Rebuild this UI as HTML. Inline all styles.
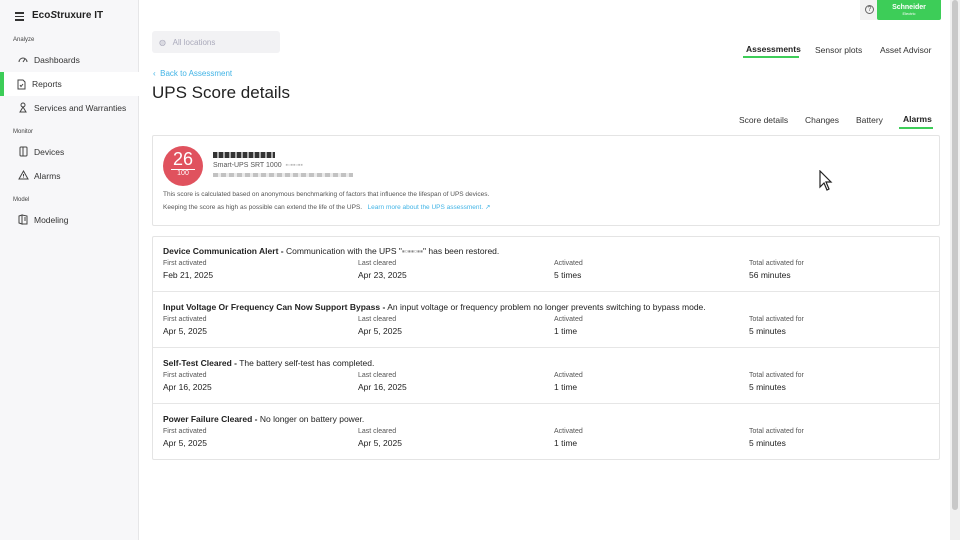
<!DOCTYPE html><html><head><style>
*{box-sizing:border-box;margin:0;padding:0}
body{width:960px;height:540px;overflow:hidden;font-family:"Liberation Sans",sans-serif;color:#222;background:#fff;position:relative}
.a{position:absolute;white-space:nowrap}
.side{position:absolute;left:0;top:0;width:139px;height:540px;background:#f7f7f9;border-right:1px solid #e6e6e8}
.sec{font-size:6px;color:#444}
.nav{font-size:8.5px;color:#333}
.lbl{font-size:7px;color:#555}
.val{font-size:8.5px;color:#222}
.t{font-size:8.5px;color:#222}
svg.i{position:absolute;fill:none;stroke:#444;stroke-width:1}
</style></head><body>
<div class="side">
<div class="a" style="left:15px;top:12px;width:9px;height:1.5px;background:#333"></div>
<div class="a" style="left:15px;top:15.5px;width:9px;height:1.5px;background:#333"></div>
<div class="a" style="left:15px;top:19px;width:9px;height:1.5px;background:#333"></div>
<div class="a" style="left:32px;top:10px;font-size:10px;font-weight:bold;color:#222">Eco<span style="font-style:italic">S</span>truxure IT</div>
<div class="a sec" style="left:13px;top:37px">Analyze</div>
<svg class="i" style="left:18px;top:55px" width="10" height="9" viewBox="0 0 10 9"><path d="M1 7 A4 4 0 1 1 9 7"/><path d="M5 7 L7 4"/></svg>
<div class="a nav" style="left:34px;top:55px">Dashboards</div>
<div class="a" style="left:0;top:72px;width:139px;height:24px;background:#fff"></div>
<div class="a" style="left:0;top:72px;width:4px;height:24px;background:#3dcd58"></div>
<svg class="i" style="left:17px;top:79px" width="9" height="11" viewBox="0 0 9 11"><path d="M1 1 H6 L8 3 V10 H1 Z"/><path d="M3 6 L4 7.5 L6 5"/></svg>
<div class="a nav" style="left:32px;top:79px">Reports</div>
<svg class="i" style="left:18px;top:102px" width="10" height="11" viewBox="0 0 10 11"><circle cx="5" cy="3" r="2"/><path d="M2 10 L5 5 L8 10 Z"/></svg>
<div class="a nav" style="left:34px;top:103px">Services and Warranties</div>
<div class="a sec" style="left:13px;top:129px">Monitor</div>
<svg class="i" style="left:19px;top:146px" width="9" height="11" viewBox="0 0 9 11"><rect x="1" y="1" width="7" height="9" rx="1"/><path d="M4 1 V10"/></svg>
<div class="a nav" style="left:34px;top:147px">Devices</div>
<svg class="i" style="left:18px;top:170px" width="11" height="10" viewBox="0 0 11 10"><path d="M5.5 1 L10 9 H1 Z"/><path d="M5.5 4 V6.5 M5.5 7.5 V8"/></svg>
<div class="a nav" style="left:34px;top:171px">Alarms</div>
<div class="a sec" style="left:13px;top:197px">Model</div>
<svg class="i" style="left:18px;top:214px" width="10" height="11" viewBox="0 0 10 11"><path d="M1 2 L4 1 V10 L1 9 Z M4 1 L9 2 V10 L4 10 M6 4 H8 M6 6 H8"/></svg>
<div class="a nav" style="left:34px;top:215px">Modeling</div>
</div>
<div class="a" style="left:950px;top:0;width:10px;height:540px;background:#f0f0f0"></div>
<div class="a" style="left:952px;top:0;width:6px;height:510px;background:#c8c8c8;border-radius:3px"></div>
<div class="a" style="left:860px;top:0;width:18px;height:20px;background:#f2f2f2"></div>
<div class="a" style="left:865px;top:5px;font-size:7px;color:#555;border:1px solid #666;border-radius:50%;width:9px;height:9px;text-align:center;line-height:8px">?</div>
<div class="a" style="left:877px;top:0;width:64px;height:20px;background:#3dcd58;color:#fff;font-size:7px;font-weight:bold;text-align:center;padding-top:4px;border-radius:0 0 2px 2px">Schneider<div style="font-size:4px;font-weight:normal">Electric</div></div>
<div class="a" style="left:152px;top:31px;width:128px;height:22px;background:#f2f2f4;border-radius:3px"></div>
<div class="a" style="left:159px;top:38px;font-size:8px;color:#aab">◍ &nbsp;&nbsp;All locations</div>
<div class="a" style="left:746px;top:44px;font-size:8.5px;font-weight:bold">Assessments</div>
<div class="a" style="left:743px;top:56px;width:56px;height:2px;background:#3dcd58"></div>
<div class="a" style="left:815px;top:45px;font-size:8.5px;color:#333">Sensor plots</div>
<div class="a" style="left:880px;top:45px;font-size:8.5px;color:#333">Asset Advisor</div>
<div class="a" style="left:153px;top:69px;font-size:8px;color:#42b4e6">‹ &nbsp;Back to Assessment</div>
<div class="a" style="left:152px;top:83px;font-size:17px;color:#222">UPS Score details</div>
<div class="a" style="left:739px;top:115px;font-size:8.5px;color:#333">Score details</div>
<div class="a" style="left:805px;top:115px;font-size:8.5px;color:#333">Changes</div>
<div class="a" style="left:856px;top:115px;font-size:8.5px;color:#333">Battery</div>
<div class="a" style="left:903px;top:114px;font-size:8.5px;font-weight:bold">Alarms</div>
<div class="a" style="left:899px;top:127px;width:34px;height:2px;background:#3dcd58"></div>
<div class="a" style="left:152px;top:135px;width:788px;height:91px;border:1px solid #e4e4e4;border-radius:2px"></div>
<div class="a" style="left:163px;top:146px;width:40px;height:40px;border-radius:50%;background:#e0525e;color:#fff;text-align:center">
<div style="font-size:18px;line-height:20px;margin-top:3px">26</div>
<div style="width:24px;height:1px;background:#fff;margin:0 auto"></div>
<div style="font-size:7px">100</div></div>
<div class="a" style="left:213px;top:152px;width:62px;height:6px;background:repeating-linear-gradient(90deg,#333 0 4px,#aaa 4px 6px)"></div>
<div class="a" style="left:213px;top:162px;font-size:7px;color:#555">Smart-UPS SRT 1000 &nbsp;<span style="color:#bbb">▪▫▪▪▫▪▪</span></div>
<div class="a" style="left:213px;top:173px;width:140px;height:4px;background:repeating-linear-gradient(90deg,#999 0 5px,#ddd 5px 8px);opacity:.6"></div>
<div class="a" style="left:163px;top:191px;font-size:6.5px;color:#555">This score is calculated based on anonymous benchmarking of factors that influence the lifespan of UPS devices.</div>
<div class="a" style="left:163px;top:203px;font-size:6.5px;color:#555">Keeping the score as high as possible can extend the life of the UPS. &nbsp;&nbsp;<span style="color:#42b4e6">Learn more about the UPS assessment. ↗</span></div>
<div class="a" style="left:152px;top:236px;width:788px;height:224px;border:1px solid #e4e4e4;border-radius:2px"></div>
<div class="a" style="left:153px;top:291px;width:786px;height:1px;background:#e6e6e6"></div>
<div class="a" style="left:153px;top:347px;width:786px;height:1px;background:#e6e6e6"></div>
<div class="a" style="left:153px;top:403px;width:786px;height:1px;background:#e6e6e6"></div>

<div class="a t" style="left:163px;top:246px"><b>Device Communication Alert -</b> Communication with the UPS "<span style="color:#888">▪▫▪▪▫▪▪</span>" has been restored.</div>
<div class="a lbl" style="left:163px;top:260px">First activated</div><div class="a val" style="left:163px;top:270px">Feb 21, 2025</div>
<div class="a lbl" style="left:358px;top:260px">Last cleared</div><div class="a val" style="left:358px;top:270px">Apr 23, 2025</div>
<div class="a lbl" style="left:554px;top:260px">Activated</div><div class="a val" style="left:554px;top:270px">5 times</div>
<div class="a lbl" style="left:749px;top:260px">Total activated for</div><div class="a val" style="left:749px;top:270px">56 minutes</div>

<div class="a t" style="left:163px;top:302px"><b>Input Voltage Or Frequency Can Now Support Bypass -</b> An input voltage or frequency problem no longer prevents switching to bypass mode.</div>
<div class="a lbl" style="left:163px;top:316px">First activated</div><div class="a val" style="left:163px;top:326px">Apr 5, 2025</div>
<div class="a lbl" style="left:358px;top:316px">Last cleared</div><div class="a val" style="left:358px;top:326px">Apr 5, 2025</div>
<div class="a lbl" style="left:554px;top:316px">Activated</div><div class="a val" style="left:554px;top:326px">1 time</div>
<div class="a lbl" style="left:749px;top:316px">Total activated for</div><div class="a val" style="left:749px;top:326px">5 minutes</div>

<div class="a t" style="left:163px;top:358px"><b>Self-Test Cleared -</b> The battery self-test has completed.</div>
<div class="a lbl" style="left:163px;top:372px">First activated</div><div class="a val" style="left:163px;top:382px">Apr 16, 2025</div>
<div class="a lbl" style="left:358px;top:372px">Last cleared</div><div class="a val" style="left:358px;top:382px">Apr 16, 2025</div>
<div class="a lbl" style="left:554px;top:372px">Activated</div><div class="a val" style="left:554px;top:382px">1 time</div>
<div class="a lbl" style="left:749px;top:372px">Total activated for</div><div class="a val" style="left:749px;top:382px">5 minutes</div>

<div class="a t" style="left:163px;top:414px"><b>Power Failure Cleared -</b> No longer on battery power.</div>
<div class="a lbl" style="left:163px;top:428px">First activated</div><div class="a val" style="left:163px;top:438px">Apr 5, 2025</div>
<div class="a lbl" style="left:358px;top:428px">Last cleared</div><div class="a val" style="left:358px;top:438px">Apr 5, 2025</div>
<div class="a lbl" style="left:554px;top:428px">Activated</div><div class="a val" style="left:554px;top:438px">1 time</div>
<div class="a lbl" style="left:749px;top:428px">Total activated for</div><div class="a val" style="left:749px;top:438px">5 minutes</div>

<svg class="a" style="left:819px;top:170px" width="14" height="22" viewBox="0 0 14 22"><path d="M1 1 L1 17 L5 13 L8 20 L10 19 L7 12 L12 12 Z" fill="#fff" stroke="#222" stroke-width="1.2"/></svg>
</body></html>
